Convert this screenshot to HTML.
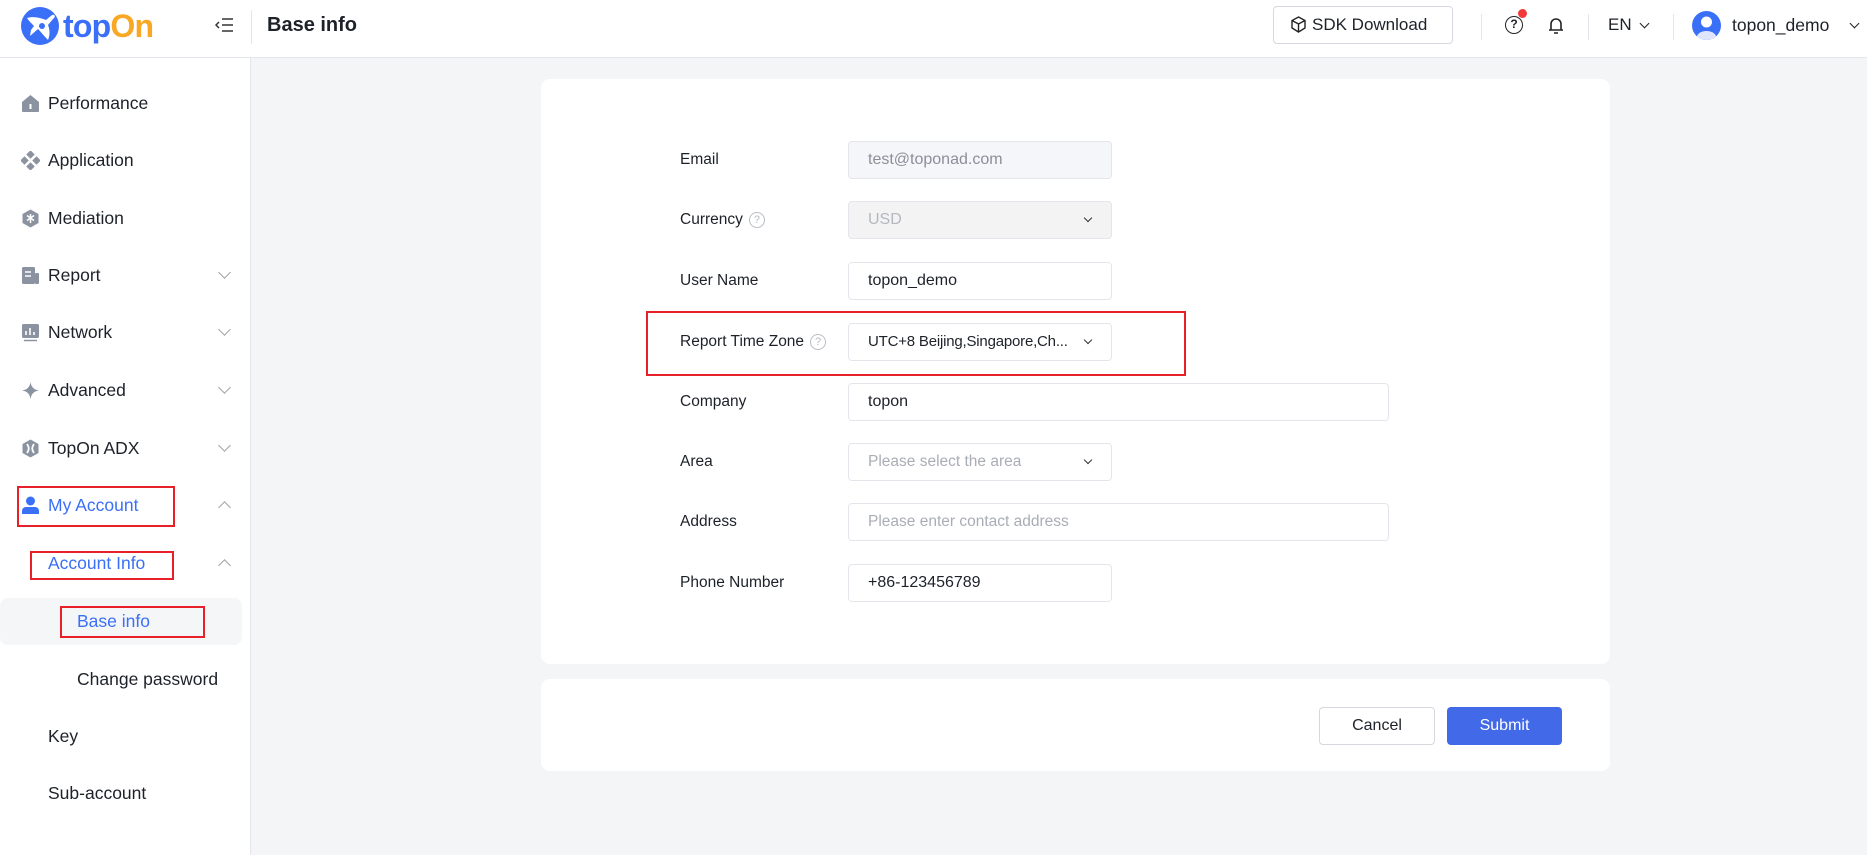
<!DOCTYPE html>
<html><head><meta charset="utf-8"><style>
*{box-sizing:border-box;margin:0;padding:0}
body{width:1867px;height:855px;overflow:hidden;background:#f4f5f7;font-family:"Liberation Sans",Arial,sans-serif;color:#1d2129;position:relative}
.abs{position:absolute}
#hdr{left:0;top:0;width:1867px;height:58px;background:#fff;border-bottom:1px solid #e5e6eb}
#side{left:0;top:58px;width:251px;height:797px;background:#fff;border-right:1px solid #e5e6eb}
.it{position:absolute;left:48px;font-size:17.5px;line-height:22px;transform:translateY(-11px);white-space:nowrap}
.ic{position:absolute;left:21px;width:19px;height:19px;transform:translateY(-9px)}
.chev{position:absolute;left:220px;width:9px;height:9px;border-right:1.3px solid #a0a4ab;border-bottom:1.3px solid #a0a4ab;transform:translateY(-7px) rotate(45deg)}
.chev.up{transform:translateY(-2px) rotate(-135deg)}
.red{position:absolute;border:2.5px solid #e8202a}
.card{position:absolute;background:#fff;border-radius:9px}
.lbl{position:absolute;left:680px;font-size:15.5px;line-height:20px;transform:translateY(-10px);white-space:nowrap}
.inp{position:absolute;left:848px;height:38px;border:1px solid #e5e6eb;border-radius:4px;background:#fff;font-size:16px;line-height:36px;padding-left:19px;transform:translateY(-19px);white-space:nowrap;overflow:hidden}
.dd::after{content:"";position:absolute;right:20px;top:13px;width:5px;height:5px;border-right:1.5px solid #333;border-bottom:1.5px solid #333;transform:rotate(45deg)}
.q{display:inline-block;width:16px;height:16px;border:1px solid #b8bcc4;border-radius:50%;color:#b8bcc4;font-size:11px;line-height:14px;text-align:center;vertical-align:1px;margin-left:6px}
.ph{color:#a9adb5}
</style></head><body>
<div id="hdr" class="abs">
 <svg class="abs" style="left:20px;top:6px" width="40" height="40" viewBox="0 0 40 40"><circle cx="20" cy="20" r="19" fill="#3a6ff7"/><path d="M7 12 C14 10 20 12 26 14 L32 9 C35 8 36 11 33 13 L28 19 C30 24 30 29 28 34 C24 30 21 26 18 23 L10 30 L11 24 L14 20 C11 17 9 15 7 12Z" fill="#fff"/><circle cx="22" cy="20" r="3" fill="#3a6ff7"/></svg>
 <div class="abs" style="left:63px;top:4px;font-size:32px;font-weight:bold;letter-spacing:-0.8px;line-height:44px"><span style="color:#3a6ff7">top</span><span style="color:#f9a825">On</span></div>
 <svg class="abs" style="left:215px;top:16px" width="20" height="18" viewBox="0 0 20 18" fill="none" stroke="#333" stroke-width="1.5"><path d="M4 6 L1 9 L4 12"/><path d="M7 3h11M7 9h11M7 15h11"/></svg>
 <div class="abs" style="left:251px;top:10px;width:1px;height:34px;background:#e5e6eb"></div>
 <div class="abs" style="left:267px;top:13px;font-size:20px;font-weight:bold;line-height:24px">Base info</div>
 <div class="abs" style="left:1273px;top:6px;width:180px;height:38px;border:1px solid #d5d8de;border-radius:4px;font-size:17px;line-height:36px;padding-left:38px;color:#1d2129">SDK Download</div>
 <svg class="abs" style="left:1290px;top:16px" width="17" height="17" viewBox="0 0 17 17" fill="none" stroke="#222" stroke-width="1.4"><path d="M8.5 1 L15 4.5 V12 L8.5 16 L2 12 V4.5Z M2 4.5 L8.5 8 L15 4.5 M8.5 8 V16"/></svg>
 <div class="abs" style="left:1481px;top:14px;width:1px;height:26px;background:#e5e6eb"></div>
 <div class="abs" style="left:1505px;top:16px;width:18px;height:18px;border:1.6px solid #222;border-radius:50%;font-size:12px;font-weight:bold;line-height:15px;text-align:center">?</div>
 <div class="abs" style="left:1518px;top:9px;width:9px;height:9px;background:#f03a3a;border-radius:50%"></div>
 <svg class="abs" style="left:1548px;top:16px" width="16" height="19" viewBox="0 0 16 19" fill="none" stroke="#222" stroke-width="1.6"><path d="M3 14 V8 a5 5 0 0 1 10 0 V14 M1 14 H15 M6 17 H10"/></svg>
 <div class="abs" style="left:1588px;top:14px;width:1px;height:26px;background:#e5e6eb"></div>
 <div class="abs" style="left:1608px;top:14px;font-size:17px;line-height:22px">EN</div>
 <div class="abs" style="left:1641px;top:20px;width:7px;height:7px;border-right:1.5px solid #222;border-bottom:1.5px solid #222;transform:rotate(45deg)"></div>
 <div class="abs" style="left:1673px;top:14px;width:1px;height:26px;background:#e5e6eb"></div>
 <svg class="abs" style="left:1692px;top:11px" width="29" height="29" viewBox="0 0 29 29"><defs><clipPath id="c"><circle cx="14.5" cy="14.5" r="14.5"/></clipPath></defs><circle cx="14.5" cy="14.5" r="14.5" fill="#3a6ff7"/><g clip-path="url(#c)"><circle cx="14.5" cy="11" r="5.5" fill="#fff"/><ellipse cx="14.5" cy="27" rx="10" ry="7" fill="#dfe6fb"/></g></svg>
 <div class="abs" style="left:1732px;top:14px;font-size:17.5px;line-height:22px">topon_demo</div>
 <div class="abs" style="left:1851px;top:20px;width:7px;height:7px;border-right:1.5px solid #222;border-bottom:1.5px solid #222;transform:rotate(45deg)"></div>
</div>

<div id="side" class="abs"></div>
<div class="abs" style="left:0;top:598px;width:242px;height:47px;background:#f5f6f8;border-radius:8px"></div>

<svg class="ic" style="top:103px" viewBox="0 0 19 19"><path d="M1 8 L9.5 1 L18 8 V17 a1 1 0 0 1 -1 1 H2 a1 1 0 0 1 -1 -1Z" fill="#8c93a0"/><rect x="8.5" y="10" width="2" height="5" fill="#fff"/></svg>
<div class="it" style="top:103px">Performance</div>
<svg class="ic" style="top:160px" viewBox="0 0 19 19" fill="#8c93a0"><rect x="6.5" y="0.5" width="6" height="6" transform="rotate(45 9.5 3.5)"/><rect x="0.5" y="6.5" width="6" height="6" transform="rotate(45 3.5 9.5)"/><rect x="12.5" y="6.5" width="6" height="6" transform="rotate(45 15.5 9.5)"/><rect x="6.5" y="12.5" width="6" height="6" transform="rotate(45 9.5 15.5)"/></svg>
<div class="it" style="top:160px">Application</div>
<svg class="ic" style="top:218px" viewBox="0 0 19 19"><path d="M9.5 0.5 L17.5 5 V14 L9.5 18.5 L1.5 14 V5Z" fill="#8c93a0"/><path d="M9.5 5 V9 M9.5 9 L6 11.5 M9.5 9 L13 11.5 M6 6.5 L9.5 9 M13 6.5 L9.5 9 M9.5 9 V14" stroke="#fff" stroke-width="1.5"/></svg>
<div class="it" style="top:218px">Mediation</div>
<svg class="ic" style="top:275px" viewBox="0 0 19 19"><rect x="1" y="1" width="13" height="17" rx="1.5" fill="#8c93a0"/><rect x="14" y="7" width="4" height="11" rx="1" fill="#8c93a0"/><path d="M4 6h6M4 10h6" stroke="#fff" stroke-width="1.6"/></svg>
<div class="it" style="top:275px">Report</div><div class="chev" style="top:275px"></div>
<svg class="ic" style="top:332px" viewBox="0 0 19 19"><rect x="1" y="1" width="17" height="14" rx="1.5" fill="#8c93a0"/><path d="M5 12V8M9 12V5M13 12V9" stroke="#fff" stroke-width="1.6"/><path d="M3 17.5h13" stroke="#8c93a0" stroke-width="1.5"/></svg>
<div class="it" style="top:332px">Network</div><div class="chev" style="top:332px"></div>
<svg class="ic" style="top:390px" viewBox="0 0 19 19"><path d="M9.5 1 Q10.5 8.5 18 9.5 Q10.5 10.5 9.5 18 Q8.5 10.5 1 9.5 Q8.5 8.5 9.5 1Z" fill="#8c93a0"/></svg>
<div class="it" style="top:390px">Advanced</div><div class="chev" style="top:390px"></div>
<svg class="ic" style="top:448px" viewBox="0 0 19 19"><path d="M9.5 0.5 L17.5 5 V14 L9.5 18.5 L1.5 14 V5Z" fill="#8c93a0"/><path d="M6 5 Q9.5 9.5 6 14 M13 5 Q9.5 9.5 13 14" stroke="#fff" stroke-width="1.8" fill="none"/></svg>
<div class="it" style="top:448px">TopOn ADX</div><div class="chev" style="top:448px"></div>
<svg class="ic" style="top:505px" viewBox="0 0 19 19" fill="#3a6ff7"><circle cx="9.5" cy="5" r="4.5"/><path d="M1 18 V15 a4 4 0 0 1 4 -4 H14 a4 4 0 0 1 4 4 V18Z"/></svg>
<div class="it" style="top:505px;color:#3a6ff7">My Account</div><div class="chev up" style="top:505px"></div>
<div class="it" style="top:563px;color:#3a6ff7">Account Info</div><div class="chev up" style="top:563px"></div>
<div class="it" style="top:621px;left:77px;color:#3a6ff7">Base info</div>
<div class="it" style="top:679px;left:77px">Change password</div>
<div class="it" style="top:736px">Key</div>
<div class="it" style="top:793px">Sub-account</div>
<div class="red" style="left:17px;top:486px;width:158px;height:41px"></div>
<div class="red" style="left:30px;top:551px;width:144px;height:29px"></div>
<div class="red" style="left:60px;top:606px;width:145px;height:32px"></div>

<div class="card" style="left:541px;top:79px;width:1069px;height:585px"></div>
<div class="card" style="left:541px;top:679px;width:1069px;height:92px"></div>

<div class="lbl" style="top:160px">Email</div>
<div class="inp" style="top:160px;width:264px;background:#f5f6fa;color:#8a8f99">test@toponad.com</div>
<div class="lbl" style="top:220px">Currency<span class="q">?</span></div>
<div class="inp dd" style="top:220px;width:264px;background:#f3f3f3;color:#b5b8be">USD</div>
<div class="lbl" style="top:281px">User Name</div>
<div class="inp" style="top:281px;width:264px">topon_demo</div>
<div class="lbl" style="top:342px">Report Time Zone<span class="q">?</span></div>
<div class="inp dd" style="top:342px;width:264px;font-size:15px;letter-spacing:-0.2px">UTC+8 Beijing,Singapore,Ch...</div>
<div class="red" style="left:646px;top:311px;width:540px;height:65px"></div>
<div class="lbl" style="top:402px">Company</div>
<div class="inp" style="top:402px;width:541px">topon</div>
<div class="lbl" style="top:462px">Area</div>
<div class="inp dd ph" style="top:462px;width:264px;font-size:15.5px">Please select the area</div>
<div class="lbl" style="top:522px">Address</div>
<div class="inp ph" style="top:522px;width:541px;font-size:15.5px">Please enter contact address</div>
<div class="lbl" style="top:583px">Phone Number</div>
<div class="inp" style="top:583px;width:264px">+86-123456789</div>

<div class="abs" style="left:1319px;top:707px;width:116px;height:38px;border:1px solid #d5d8de;border-radius:4px;text-align:center;font-size:16px;line-height:36px">Cancel</div>
<div class="abs" style="left:1447px;top:707px;width:115px;height:38px;background:#4169e8;border-radius:4px;text-align:center;font-size:16px;line-height:38px;color:#fff">Submit</div>
</body></html>
